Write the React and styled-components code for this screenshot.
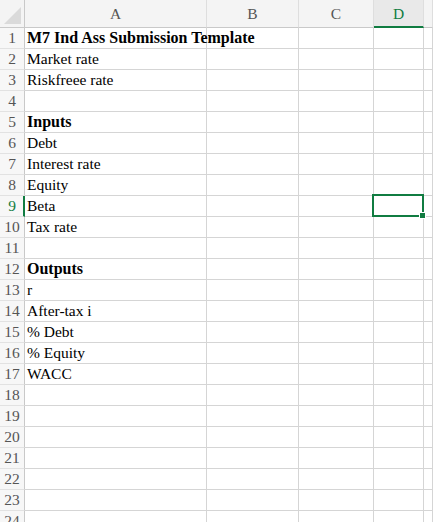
import React from 'react'
import styled, { createGlobalStyle } from 'styled-components'

const GlobalStyle = createGlobalStyle`
  html, body {
    margin: 0;
    padding: 0;
    background: #fff;
  }
  body {
    font-family: "Liberation Serif", "Times New Roman", serif;
    overflow: hidden;
  }
`

const GREEN = '#107c41'
const LINE = '#d5d5d5'

const columns = ['A', 'B', 'C', 'D', 'E']
const activeCol = 'D'
const activeRow = 9

const cells = {
  1: { text: 'M7 Ind Ass Submission Template', bold: true },
  2: { text: 'Market rate' },
  3: { text: 'Riskfreee rate' },
  5: { text: 'Inputs', bold: true },
  6: { text: 'Debt' },
  7: { text: 'Interest rate' },
  8: { text: 'Equity' },
  9: { text: 'Beta' },
  10: { text: 'Tax rate' },
  12: { text: 'Outputs', bold: true },
  13: { text: 'r' },
  14: { text: 'After-tax i' },
  15: { text: '% Debt' },
  16: { text: '% Equity' },
  17: { text: 'WACC' },
}

const Sheet = styled.div`
  display: grid;
  grid-template-columns: 25px 182px 92px 75px 50px 1fr;
  grid-template-rows: 28px;
  grid-auto-rows: 21px;
  width: 433px;
  height: 522px;
  overflow: hidden;
`

const Corner = styled.div`
  position: relative;
  background: #f4f4f4;
  border-right: 1px solid #c9c9c9;
  border-bottom: 1px solid #c9c9c9;
  box-sizing: border-box;
  &::after {
    content: '';
    position: absolute;
    right: 3px;
    bottom: 3px;
    width: 0;
    height: 0;
    border-left: 17px solid transparent;
    border-bottom: 17px solid #dadada;
  }
`

const ColHead = styled.div`
  display: flex;
  align-items: center;
  justify-content: center;
  box-sizing: border-box;
  background: ${(p) => (p.$active ? '#e9e9e9' : '#f4f4f4')};
  border-right: 1px solid #dedede;
  border-bottom: ${(p) => (p.$active ? `2px solid ${GREEN}` : '1px solid #c9c9c9')};
  color: ${(p) => (p.$active ? GREEN : '#555')};
  font-size: 15.5px;
  padding-top: ${(p) => (p.$active ? '1px' : '0')};
`

const RowHead = styled.div`
  display: flex;
  align-items: center;
  justify-content: center;
  box-sizing: border-box;
  background: #f7f7f7;
  border-right: ${(p) => (p.$active ? `2px solid ${GREEN}` : '1px solid #c9c9c9')};
  border-bottom: 1px solid #e2e2e2;
  color: ${(p) => (p.$active ? GREEN : '#555')};
  font-size: 15.5px;
  padding-left: ${(p) => (p.$active ? '1px' : '0')};
`

const Cell = styled.div`
  position: relative;
  display: flex;
  align-items: center;
  box-sizing: border-box;
  border-right: 1px solid ${LINE};
  border-bottom: 1px solid ${LINE};
  padding-left: 2px;
  font-size: ${(p) => (p.$bold ? '16px' : '15.5px')};
  color: #000;
  white-space: nowrap;
  overflow: ${(p) => (p.$spill || p.$active ? 'visible' : 'hidden')};
  font-weight: ${(p) => (p.$bold ? 700 : 400)};
  z-index: ${(p) => (p.$active ? 3 : p.$spill ? 1 : 0)};
`

const Selection = styled.div`
  position: absolute;
  left: -2px;
  top: -2px;
  right: -1px;
  bottom: -1px;
  border: 2px solid ${GREEN};
  pointer-events: none;
  &::after {
    content: '';
    position: absolute;
    right: -4px;
    bottom: -4px;
    width: 5px;
    height: 5px;
    background: ${GREEN};
    border: 1px solid #fff;
  }
`

export default function App() {
  const rows = Array.from({ length: 24 }, (_, i) => i + 1)
  return (
    <>
      <GlobalStyle />
      <Sheet>
        <Corner />
        {columns.map((c) => (
          <ColHead key={c} $active={c === activeCol}>
            {c === 'E' ? '' : c}
          </ColHead>
        ))}
        {rows.map((r) => (
          <React.Fragment key={r}>
            <RowHead $active={r === activeRow}>{r}</RowHead>
            {columns.map((c) => {
              const data = c === 'A' ? cells[r] : null
              const active = c === activeCol && r === activeRow
              return (
                <Cell key={c} $bold={data?.bold} $spill={!!data} $active={active}>
                  {data?.text}
                  {active && <Selection />}
                </Cell>
              )
            })}
          </React.Fragment>
        ))}
      </Sheet>
    </>
  )
}
